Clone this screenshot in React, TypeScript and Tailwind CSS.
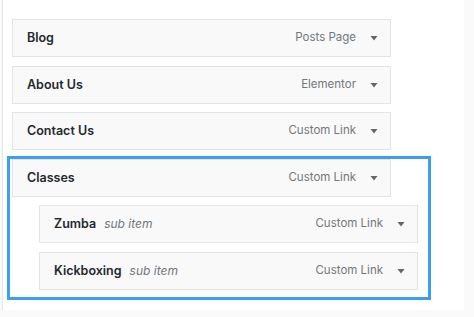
import React from "react";

type Item = { title: string; type: string; sub?: boolean };

const Arrow = () => (
  <svg width="8" height="6" viewBox="0 0 8 6" className="ml-[14px] shrink-0">
    <path d="M0.5 1 L7.5 1 L4 5.5 Z" fill="#666" />
  </svg>
);

const MenuItem: React.FC<{ item: Item }> = ({ item }) => (
  <div className="w-[379px] h-[38px] border border-[#e2e4e7] bg-[#f9f9f9] pl-[14px] pr-[12px] flex items-center">
    <span className="text-[12.5px] font-semibold text-[#23282d]">{item.title}</span>
    {item.sub && (
      <span className="ml-[8px] text-[12px] italic text-[#72777c]">sub item</span>
    )}
    <span className="ml-auto text-[11.5px] text-[#72777c]">{item.type}</span>
    <Arrow />
  </div>
);

export default function App() {
  return (
    <div
      className="w-[474px] h-[317px] bg-[#fafafa] overflow-hidden"
      style={{ fontFamily: "Inter, 'Noto Sans', sans-serif" }}
    >
      <div className="ml-[2px] w-[462px] h-[310px] bg-white border-l border-[#e5e5e5] pt-[19px] pl-[9px] flex flex-col">
        <div className="flex flex-col">
          <MenuItem item={{ title: "Blog", type: "Posts Page" }} />
          <div className="mt-[9px]">
            <MenuItem item={{ title: "About Us", type: "Elementor" }} />
          </div>
          <div className="mt-[8px]">
            <MenuItem item={{ title: "Contact Us", type: "Custom Link" }} />
          </div>
        </div>
        <div className="mt-[6px] ml-[-5px] w-[424px] border-[3px] border-[#3d9ff0] pl-[2px] pb-[7px] flex flex-col gap-[8px]">
          <MenuItem item={{ title: "Classes", type: "Custom Link" }} />
          <div className="pl-[27px] flex flex-col gap-[9px]">
            <MenuItem item={{ title: "Zumba", type: "Custom Link", sub: true }} />
            <MenuItem item={{ title: "Kickboxing", type: "Custom Link", sub: true }} />
          </div>
        </div>
      </div>
    </div>
  );
}
